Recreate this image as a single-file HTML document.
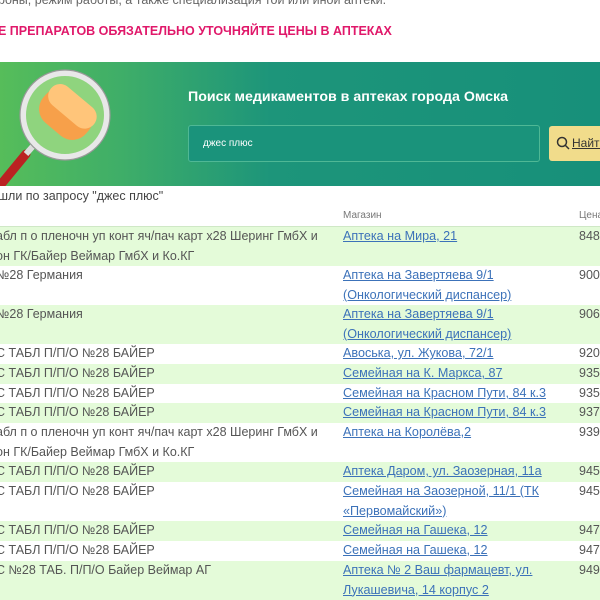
<!DOCTYPE html>
<html><head><meta charset="utf-8"><style>
body{margin:0;width:600px;height:600px;overflow:hidden;background:#fff;font-family:"Liberation Sans",sans-serif;position:relative}
.a{position:absolute;white-space:nowrap}
.row{position:absolute;left:0;width:600px}
.g{background:#e4fbd9}
.c1{position:absolute;left:-4px;top:0;color:#555;font-size:12.5px;line-height:19.7px}
.c2{position:absolute;left:343px;top:0;color:#3c72b9;font-size:12.6px;line-height:19.7px;text-decoration:underline}
.c3{position:absolute;left:579px;top:0;color:#555;font-size:12.5px;line-height:19.7px}
</style></head><body>
<div class="a" style="left:-2px;top:-7px;font-size:12.5px;color:#666">роны, режим работы, а также специализация той или иной аптеки.</div>
<div class="a" style="left:-2px;top:24px;font-size:12.5px;font-weight:bold;color:#e0186a">Е ПРЕПАРАТОВ ОБЯЗАТЕЛЬНО УТОЧНЯЙТЕ ЦЕНЫ В АПТЕКАХ</div>
<div class="a" style="left:0;top:62px;width:600px;height:124px;background:linear-gradient(90deg,#56bd5a 0%,#3fae68 20%,#1d957a 45%,#17907a 100%)"></div>
<svg class="a" style="left:0;top:62px" width="130" height="124">
<line x1="-2" y1="126" x2="26" y2="92" stroke="#b22" stroke-width="9" stroke-linecap="round"/>
<line x1="26" y1="92" x2="34" y2="83" stroke="#ddd" stroke-width="6"/>
<circle cx="65" cy="53" r="42" fill="#8fd47e" stroke="#e8e8e8" stroke-width="6"/>
<circle cx="65" cy="53" r="45" fill="none" stroke="#999" stroke-width="1.2"/>
<rect x="38" y="32" width="56" height="40" rx="18" fill="#f7a04a" transform="rotate(40 66 52)"/>
<rect x="38" y="30" width="56" height="24" rx="12" fill="#ffc57a" transform="rotate(40 66 52)"/>
</svg>
<div class="a" style="left:188px;top:89px;font-size:14.2px;font-weight:bold;color:#fff">Поиск медикаментов в аптеках города Омска</div>
<div class="a" style="left:188px;top:125px;width:350px;height:35px;border:1px solid #4fb895;border-radius:3px;background:#1a937b"></div>
<div class="a" style="left:203px;top:138px;font-size:10px;color:#fff">джес плюс</div>
<div class="a" style="left:549px;top:126px;width:60px;height:35px;border-radius:3px;background:#f1dc8b"></div>
<svg class="a" style="left:556px;top:136px" width="14" height="14"><circle cx="6" cy="6" r="4.5" fill="none" stroke="#333" stroke-width="1.5"/><line x1="9" y1="9" x2="13" y2="13" stroke="#333" stroke-width="1.5"/></svg>
<div class="a" style="left:572px;top:136px;font-size:12px;color:#333;text-decoration:underline">Найти</div>
<div class="a" style="left:-2px;top:189px;font-size:12.5px;color:#444">шли по запросу "джес плюс"</div>
<div class="a" style="left:343px;top:210px;font-size:10px;color:#777">Магазин</div>
<div class="a" style="left:579px;top:210px;font-size:10px;color:#777">Цена</div>
<div class="a" style="left:0;top:226px;width:600px;height:1px;background:#cfe8c6"></div>

<div class="row g" style="top:227px;height:39px"><div class="c1">абл п о пленочн уп конт яч/пач карт x28 Шеринг ГмбХ и<br>он ГК/Байер Веймар ГмбХ и Ко.КГ</div><div class="c2">Аптека на Мира, 21</div><div class="c3">848</div></div>
<div class="row" style="top:266px;height:39px"><div class="c1">№28 Германия</div><div class="c2">Аптека на Завертяева 9/1<br>(Онкологический диспансер)</div><div class="c3">900</div></div>
<div class="row g" style="top:305px;height:39px"><div class="c1">№28 Германия</div><div class="c2">Аптека на Завертяева 9/1<br>(Онкологический диспансер)</div><div class="c3">906</div></div>
<div class="row" style="top:344px;height:20px"><div class="c1">С ТАБЛ П/П/О №28 БАЙЕР</div><div class="c2">Авоська, ул. Жукова, 72/1</div><div class="c3">920</div></div>
<div class="row g" style="top:364px;height:20px"><div class="c1">С ТАБЛ П/П/О №28 БАЙЕР</div><div class="c2">Семейная на К. Маркса, 87</div><div class="c3">935</div></div>
<div class="row" style="top:384px;height:19px"><div class="c1">С ТАБЛ П/П/О №28 БАЙЕР</div><div class="c2">Семейная на Красном Пути, 84 к.3</div><div class="c3">935</div></div>
<div class="row g" style="top:403px;height:20px"><div class="c1">С ТАБЛ П/П/О №28 БАЙЕР</div><div class="c2">Семейная на Красном Пути, 84 к.3</div><div class="c3">937</div></div>
<div class="row" style="top:423px;height:39px"><div class="c1">абл п о пленочн уп конт яч/пач карт x28 Шеринг ГмбХ и<br>он ГК/Байер Веймар ГмбХ и Ко.КГ</div><div class="c2">Аптека на Королёва,2</div><div class="c3">939</div></div>
<div class="row g" style="top:462px;height:20px"><div class="c1">С ТАБЛ П/П/О №28 БАЙЕР</div><div class="c2">Аптека Даром, ул. Заозерная, 11а</div><div class="c3">945</div></div>
<div class="row" style="top:482px;height:39px"><div class="c1">С ТАБЛ П/П/О №28 БАЙЕР</div><div class="c2">Семейная на Заозерной, 11/1 (ТК<br>«Первомайский»)</div><div class="c3">945</div></div>
<div class="row g" style="top:521px;height:20px"><div class="c1">С ТАБЛ П/П/О №28 БАЙЕР</div><div class="c2">Семейная на Гашека, 12</div><div class="c3">947</div></div>
<div class="row" style="top:541px;height:20px"><div class="c1">С ТАБЛ П/П/О №28 БАЙЕР</div><div class="c2">Семейная на Гашека, 12</div><div class="c3">947</div></div>
<div class="row g" style="top:561px;height:39px"><div class="c1">С №28 ТАБ. П/П/О Байер Веймар АГ</div><div class="c2">Аптека № 2 Ваш фармацевт, ул.<br>Лукашевича, 14 корпус 2</div><div class="c3">949</div></div>
</body></html>
